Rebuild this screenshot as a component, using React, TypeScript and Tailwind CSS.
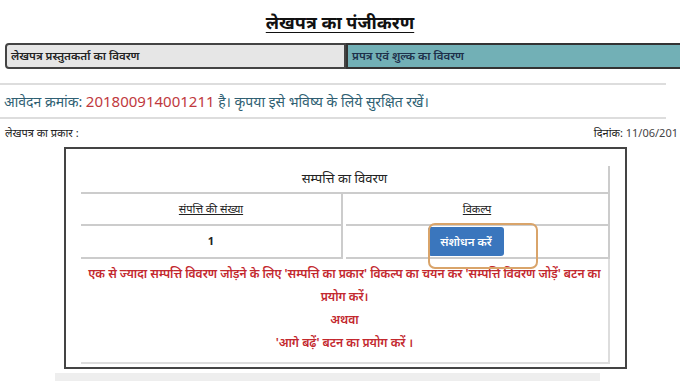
export default function App() {
  const font = { fontFamily: '"Noto Sans", "Liberation Sans", sans-serif' };
  return (
    <div className="w-[680px] h-[382px] bg-white overflow-hidden relative" style={font}>
      <div className="pt-[10px] text-center">
        <span className="text-[18px] font-bold text-[#111] underline underline-offset-[3px] leading-[24px]">
          लेखपत्र का पंजीकरण
        </span>
      </div>

      <div className="flex mt-[8px] pl-[5px] h-[26px]">
        <div className="w-[341px] bg-[#e6e6e6] border-2 border-[#444] rounded-l-[4px] flex items-center px-[4px] text-[11.5px] font-semibold text-[#222]">
          लेखपत्र प्रस्तुतकर्ता का विवरण
        </div>
        <div className="flex-1 bg-[#72b0b6] border-y-2 border-l-2 border-[#333] flex items-center px-[4px] text-[11.5px] font-semibold text-[#1d2f4a]">
          प्रपत्र एवं शुल्क का विवरण
        </div>
      </div>

      <div className="mt-[14px] mr-[14px] border-t-2 border-[#ddd]"></div>
      <div className="h-[32px] flex items-center px-[4px] text-[14px] text-[#2f5f73]">
        <span>आवेदन क्रमांक:&nbsp;</span>
        <span className="text-[#c0393e] text-[15px]">201800914001211</span>
        <span>&nbsp;है। कृपया इसे भविष्य के लिये सुरक्षित रखें।</span>
      </div>
      <div className="mr-[14px] border-t-2 border-[#ddd]"></div>

      <div className="flex justify-between items-center h-[28px] pl-[5px] pr-[2px] text-[11px] text-[#222]">
        <span>लेखपत्र का प्रकार :</span>
        <span className="whitespace-nowrap text-[11px]">
          दिनांक: <span className="text-[#444]">11/06/201</span>
        </span>
      </div>

      <div className="ml-[64px] w-[563px] h-[222px] border-2 border-[#444] px-[15px] pt-[17px]">
        <div className="border-b-2 border-r-2 border-[#ccc] h-[28px] flex items-center justify-center text-[13px] text-[#222]">
          सम्पत्ति का विवरण
        </div>
        <div className="flex">
          <div className="w-[262px] border-b-2 border-r-2 border-[#ccc] h-[32px] flex items-center justify-center text-[11px] text-[#222] underline">
            संपत्ति की संख्या
          </div>
          <div className="flex-1 ml-[3px] border-b-2 border-r-2 border-[#ccc] h-[32px] flex items-center justify-center text-[11px] text-[#222] underline">
            विकल्प
          </div>
        </div>
        <div className="flex">
          <div className="w-[262px] border-b-2 border-r-2 border-[#ccc] h-[33px] flex items-center justify-center text-[11px] font-bold text-[#222]">
            1
          </div>
          <div className="flex-1 ml-[3px] border-b-2 border-r-2 border-[#ccc] h-[33px] flex items-center justify-center relative">
            <div className="w-[76px] h-[29px] mr-[22px] bg-[#3a76bd] rounded-[3px] flex items-center justify-center text-[11.5px] font-semibold text-white">
              संशोधन करें
            </div>
            <div className="absolute left-[82px] -top-[3px] w-[110px] h-[46px] border-2 border-[#d9a46a] rounded-[7px]"></div>
          </div>
        </div>
        <div className="border-b-2 border-r-2 border-[#ddd] pt-[3px] pb-[8px] text-center text-[12px] font-semibold text-[#c3282e] leading-[23px]">
          <div>एक से ज्यादा सम्पत्ति विवरण जोड़ने के लिए 'सम्पत्ति का प्रकार' विकल्प का चयन कर 'सम्पत्ति विवरण जोड़ें' बटन का</div>
          <div>प्रयोग करें।</div>
          <div>अथवा</div>
          <div>'आगे बढ़ें' बटन का प्रयोग करें ।</div>
        </div>
      </div>
      <div className="ml-[55px] w-[545px] h-[8px] mt-[4px] bg-[#eee]"></div>
    </div>
  );
}
